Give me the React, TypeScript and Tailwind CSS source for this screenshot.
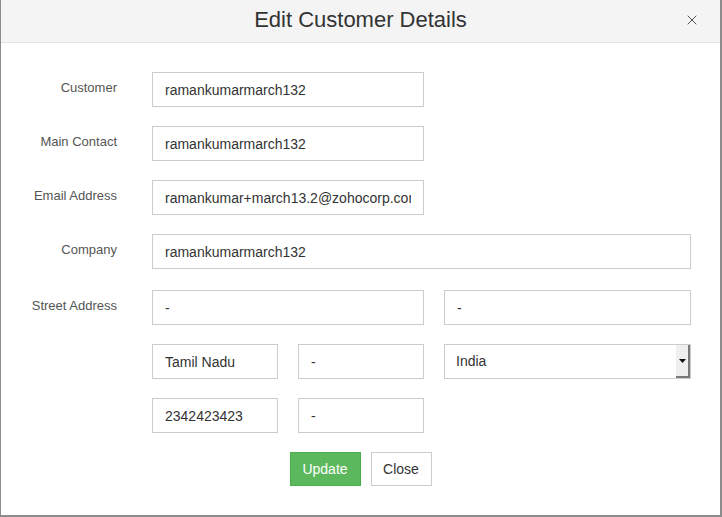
import { X } from "lucide-react";

const font = { fontFamily: '"Liberation Sans", Arial, sans-serif' };

const Field = ({ value, w }: { value: string; w: string }) => (
  <input
    readOnly
    value={value}
    className={`${w} h-[35px] border border-[#cccccc] bg-white px-[12px] text-[14px] text-[#333333] outline-none`}
  />
);

const Label = ({ children, className = "" }: { children: React.ReactNode; className?: string }) => (
  <div className={`pt-[8px] text-right text-[13px] leading-[16px] text-[#555555] ${className}`}>{children}</div>
);

const CountrySelect = () => (
  <div className="flex h-[35px] w-[247px] items-stretch border border-[#cccccc] bg-white">
    <div className="flex flex-1 items-center px-[11px] text-[14px] text-[#333333]">India</div>
    <div className="flex w-[14px] items-center justify-center border-b-2 border-r-2 border-[#7a7a7a] bg-[#efefef]">
      <svg width="7" height="4" viewBox="0 0 7 4">
        <path d="M0 0h7L3.5 4z" fill="#111" />
      </svg>
    </div>
  </div>
);

export default function App() {
  return (
    <div
      style={font}
      className="flex h-[517px] w-[722px] flex-col border-b-2 border-l border-r-2 border-[#8c8c8c] bg-white"
    >
      <div className="relative flex h-[43px] shrink-0 items-center justify-center border-b border-[#e3e3e3] bg-[#f4f4f4]">
        <h1 className="pb-[3px] text-[22px] font-normal text-[#333333]">Edit Customer Details</h1>
        <button className="absolute right-[20px] top-[12px] text-[#444444]">
          <X className="h-[16px] w-[16px]" strokeWidth={1.4} />
        </button>
      </div>

      <div className="grid grid-cols-[116px_1fr] gap-x-[35px] gap-y-[19px] pt-[29px]">
        <Label>Customer</Label>
        <Field value="ramankumarmarch132" w="w-[272px]" />

        <Label>Main Contact</Label>
        <Field value="ramankumarmarch132" w="w-[272px]" />

        <Label>Email Address</Label>
        <Field value="ramankumar+march13.2@zohocorp.com" w="w-[272px]" />

        <Label>Company</Label>
        <Field value="ramankumarmarch132" w="w-[539px]" />

        <Label className="mt-[2px]">Street Address</Label>
        <div className="mt-[2px] flex gap-[20px]">
          <Field value="-" w="w-[272px]" />
          <Field value="-" w="w-[247px]" />
        </div>

        <div />
        <div className="flex gap-[20px]">
          <Field value="Tamil Nadu" w="w-[126px]" />
          <Field value="-" w="w-[126px]" />
          <CountrySelect />
        </div>

        <div />
        <div className="flex gap-[20px]">
          <Field value="2342423423" w="w-[126px]" />
          <Field value="-" w="w-[126px]" />
        </div>
      </div>

      <div className="mt-[19px] flex justify-center gap-[10px]">
        <button className="h-[34px] w-[71px] border border-[#4cae4c] bg-[#5cb85c] text-[14px] text-white">
          Update
        </button>
        <button className="h-[34px] w-[61px] border border-[#cccccc] bg-white text-[14px] text-[#333333]">
          Close
        </button>
      </div>
    </div>
  );
}
